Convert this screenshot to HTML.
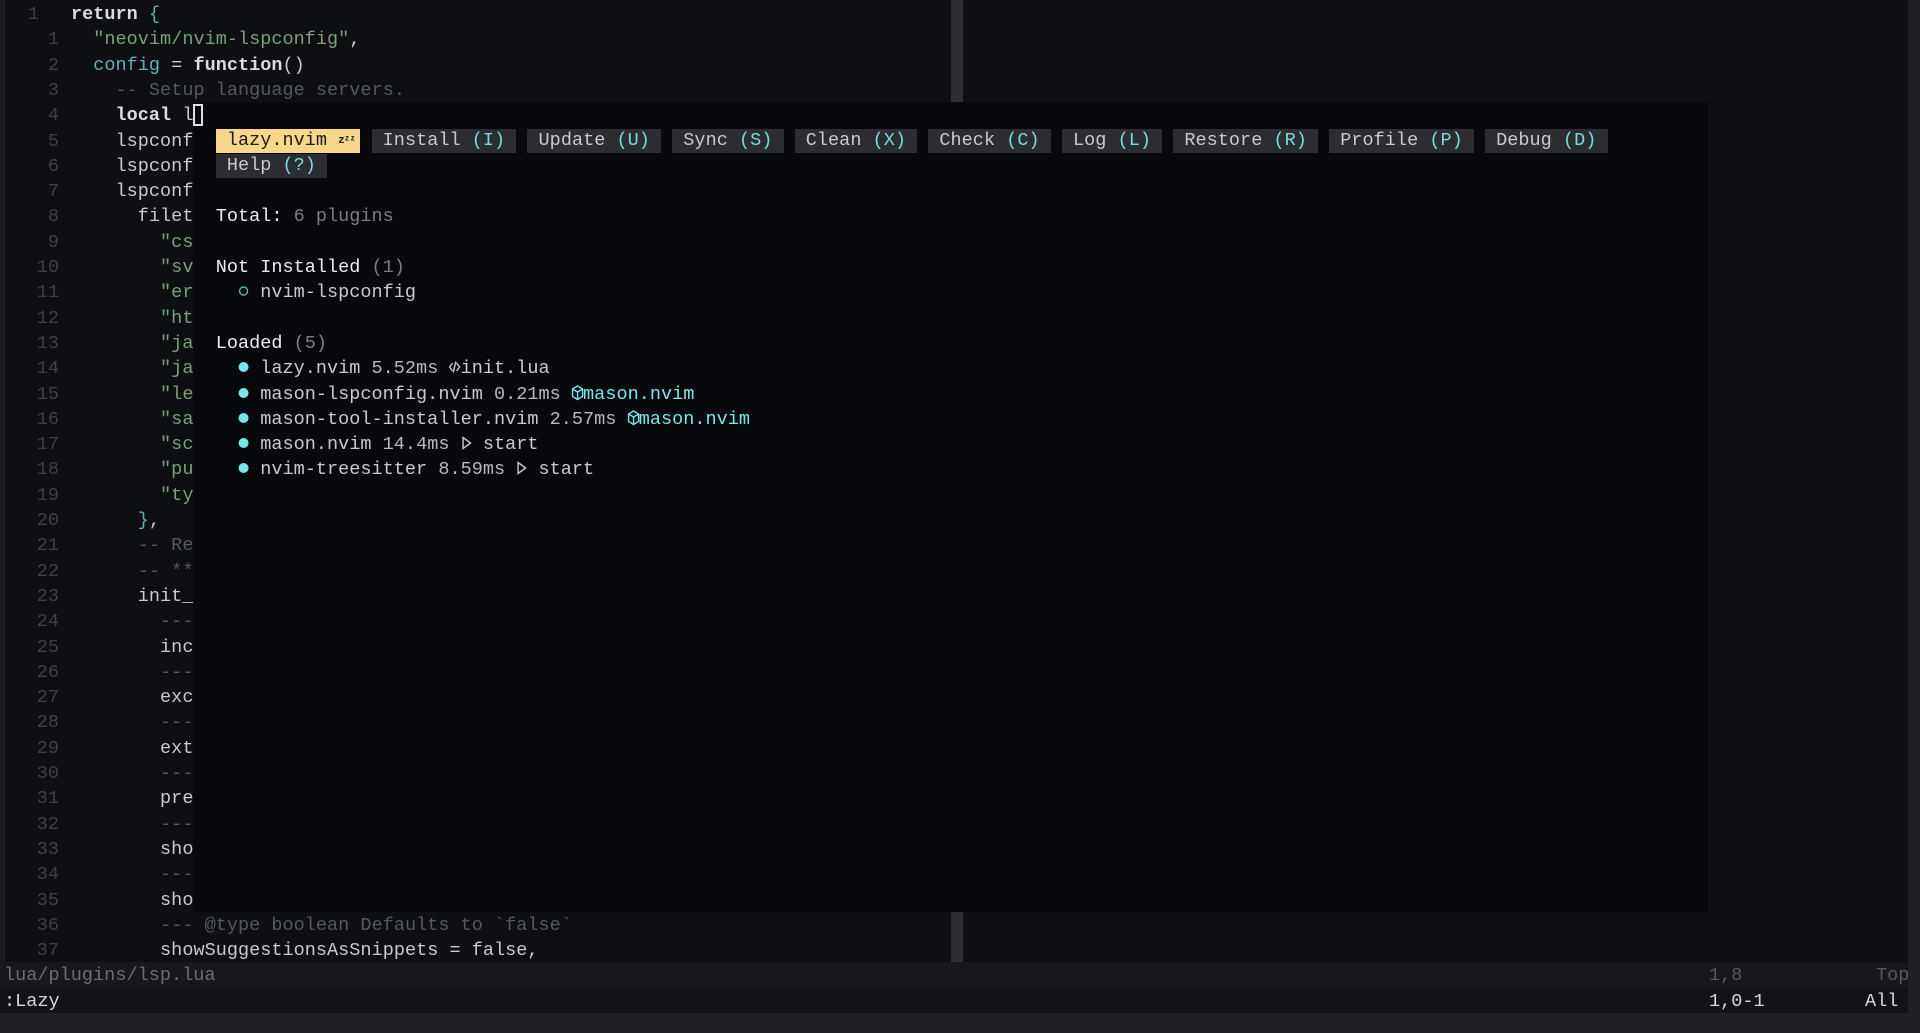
<!DOCTYPE html>
<html><head><meta charset="utf-8"><style>
html,body{margin:0;padding:0;width:1920px;height:1033px;overflow:hidden;background:#0e0f13;}
body{position:relative;font-family:"Liberation Mono","DejaVu Sans Mono",monospace;font-size:18.5px;letter-spacing:0.03px;color:#c9cacd;}
.r{position:absolute;height:25.3px;line-height:25.3px;white-space:pre;margin-top:2px}
.ln{position:absolute;left:0;width:59px;text-align:right;color:#3d4046;height:25.3px;line-height:25.3px;margin-top:2px}
.kw{color:#dcdcdc;font-weight:bold}
.tl{color:#5fb3b3}
.st{color:#79a078}
.cm{color:#55595f}
.dim{color:#7a7d83}
.b{background:#2b2d31;color:#c9cacd;display:inline-block;height:24px;line-height:24px;vertical-align:top}
.k{color:#79dcdc}
.cy{color:#79e6ea}
.dot{display:inline-block;width:11.13px;color:#79e6ea;font-size:24px;line-height:20px;vertical-align:top;text-align:center;margin-top:1px}
.ic{display:inline-block;width:11.13px;height:20px;vertical-align:-4px;overflow:visible}
</style></head><body>
<div style="position:absolute;left:0;top:0;width:5px;height:962px;background:#1c1d21"></div>
<div style="position:absolute;left:1908px;top:0;width:12px;height:1013px;background:#1f2023"></div>
<div style="position:absolute;left:951px;top:0;width:12px;height:962px;background:#2e2f33"></div>

<div class="ln" style="top:0;left:28px;width:auto;text-align:left;color:#3d4046">1</div>
<div id="nums"></div>

<div class="r" style="left:71px;top:0"><span class="kw">return</span> <span class="tl">{</span></div>
<div class="r" style="left:71px;top:25.3px">  <span class="st">"neovim/nvim-lspconfig"</span>,</div>
<div class="r" style="left:71px;top:50.6px">  <span class="tl">config</span> = <span class="kw">function</span>()</div>
<div class="r" style="left:71px;top:75.9px">    <span class="cm">-- Setup language servers.</span></div>
<div class="r" style="left:71px;top:101.2px">    <span class="kw">local</span> l</div>
<div class="r" style="left:71px;top:126.5px">    lspconf</div>
<div class="r" style="left:71px;top:151.8px">    lspconf</div>
<div class="r" style="left:71px;top:177.1px">    lspconf</div>
<div class="r" style="left:71px;top:202.4px">      filet</div>
<div class="r st" style="left:71px;top:227.7px">        "cs</div>
<div class="r st" style="left:71px;top:253px">        "sv</div>
<div class="r st" style="left:71px;top:278.3px">        "er</div>
<div class="r st" style="left:71px;top:303.6px">        "ht</div>
<div class="r st" style="left:71px;top:328.9px">        "ja</div>
<div class="r st" style="left:71px;top:354.2px">        "ja</div>
<div class="r st" style="left:71px;top:379.5px">        "le</div>
<div class="r st" style="left:71px;top:404.8px">        "sa</div>
<div class="r st" style="left:71px;top:430.1px">        "sc</div>
<div class="r st" style="left:71px;top:455.4px">        "pu</div>
<div class="r st" style="left:71px;top:480.7px">        "ty</div>
<div class="r" style="left:71px;top:506px">      <span class="tl">}</span>,</div>
<div class="r cm" style="left:71px;top:531.3px">      -- Re</div>
<div class="r cm" style="left:71px;top:556.6px">      -- **</div>
<div class="r" style="left:71px;top:581.9px">      init_</div>
<div class="r cm" style="left:71px;top:607.2px">        ---</div>
<div class="r" style="left:71px;top:632.5px">        inc</div>
<div class="r cm" style="left:71px;top:657.8px">        ---</div>
<div class="r" style="left:71px;top:683.1px">        exc</div>
<div class="r cm" style="left:71px;top:708.4px">        ---</div>
<div class="r" style="left:71px;top:733.7px">        ext</div>
<div class="r cm" style="left:71px;top:759px">        ---</div>
<div class="r" style="left:71px;top:784.3px">        pre</div>
<div class="r cm" style="left:71px;top:809.6px">        ---</div>
<div class="r" style="left:71px;top:834.9px">        sho</div>
<div class="r cm" style="left:71px;top:860.2px">        ---</div>
<div class="r" style="left:71px;top:885.5px">        sho</div>
<div class="r" style="left:71px;top:910.8px">        <span class="cm">--- @type boolean Defaults to `false`</span></div>
<div class="r" style="left:71px;top:936.1px">        showSuggestionsAsSnippets = false,</div>

<div style="position:absolute;left:193px;top:101.5px;width:1515px;height:810px;background:#08090d"></div>
<div style="position:absolute;left:193px;top:104px;width:10px;height:22px;border:2px solid #e0e0e0;box-sizing:border-box"></div>

<div class="r" style="left:215.7px;top:126.5px"><span class="b" style="background:#f8d68a;color:#1a1a1a"> lazy.nvim <span style="display:inline-block;width:11.13px;font-size:11px;font-weight:bold;vertical-align:2px;letter-spacing:-1px">zᶻᶻ</span> </span> <span class="b"> Install <span class="k">(I)</span> </span> <span class="b"> Update <span class="k">(U)</span> </span> <span class="b"> Sync <span class="k">(S)</span> </span> <span class="b"> Clean <span class="k">(X)</span> </span> <span class="b"> Check <span class="k">(C)</span> </span> <span class="b"> Log <span class="k">(L)</span> </span> <span class="b"> Restore <span class="k">(R)</span> </span> <span class="b"> Profile <span class="k">(P)</span> </span> <span class="b"> Debug <span class="k">(D)</span> </span></div>
<div class="r" style="left:215.7px;top:151.8px"><span class="b"> Help <span class="k">(?)</span> </span></div>
<div class="r" style="left:215.7px;top:202.4px"><span style="color:#eee">Total:</span> <span class="dim">6 plugins</span></div>
<div class="r" style="left:215.7px;top:253px"><span style="color:#eee">Not Installed</span> <span class="dim">(1)</span></div>
<div class="r" style="left:215.7px;top:278.3px">  <svg class="ic" viewBox="0 0 11 20"><circle cx="5.5" cy="10" r="4" stroke="#5fb3b3" stroke-width="1.4" fill="none"/></svg> nvim-lspconfig</div>
<div class="r" style="left:215.7px;top:328.9px"><span style="color:#eee">Loaded</span> <span class="dim">(5)</span></div>
<div class="r" style="left:215.7px;top:354.2px">  <svg class="ic" viewBox="0 0 11 20"><circle cx="5.5" cy="10" r="5" fill="#79e6ea"/></svg> lazy.nvim <span style="color:#b8b9bc">5.52ms</span> <svg class="ic" viewBox="0 0 11 20"><path d="M3.5 6 L0.5 10 L3.5 14 M7.5 6 L10.5 10 L7.5 14 M6.8 4.5 L4.2 15.5" stroke="#c9cacd" stroke-width="1.4" fill="none"/></svg>init.lua</div>
<div class="r" style="left:215.7px;top:379.5px">  <svg class="ic" viewBox="0 0 11 20"><circle cx="5.5" cy="10" r="5" fill="#79e6ea"/></svg> mason-lspconfig.nvim <span style="color:#b8b9bc">0.21ms</span> <svg class="ic" viewBox="0 0 11 20"><path d="M5.5 3 L10.5 6 L10.5 13.5 L5.5 16.5 L0.5 13.5 L0.5 6 Z M0.5 6 L5.5 9 L10.5 6 M5.5 9 L5.5 16.5" stroke="#79e6ea" stroke-width="1.4" fill="none"/></svg><span class="cy">mason.nvim</span></div>
<div class="r" style="left:215.7px;top:404.8px">  <svg class="ic" viewBox="0 0 11 20"><circle cx="5.5" cy="10" r="5" fill="#79e6ea"/></svg> mason-tool-installer.nvim <span style="color:#b8b9bc">2.57ms</span> <svg class="ic" viewBox="0 0 11 20"><path d="M5.5 3 L10.5 6 L10.5 13.5 L5.5 16.5 L0.5 13.5 L0.5 6 Z M0.5 6 L5.5 9 L10.5 6 M5.5 9 L5.5 16.5" stroke="#79e6ea" stroke-width="1.4" fill="none"/></svg><span class="cy">mason.nvim</span></div>
<div class="r" style="left:215.7px;top:430.1px">  <svg class="ic" viewBox="0 0 11 20"><circle cx="5.5" cy="10" r="5" fill="#79e6ea"/></svg> mason.nvim <span style="color:#b8b9bc">14.4ms</span> <svg class="ic" viewBox="0 0 11 20"><path d="M2 4.5 L9.5 10 L2 15.5 Z" stroke="#c9cacd" stroke-width="1.4" fill="none"/></svg> start</div>
<div class="r" style="left:215.7px;top:455.4px">  <svg class="ic" viewBox="0 0 11 20"><circle cx="5.5" cy="10" r="5" fill="#79e6ea"/></svg> nvim-treesitter <span style="color:#b8b9bc">8.59ms</span> <svg class="ic" viewBox="0 0 11 20"><path d="M2 4.5 L9.5 10 L2 15.5 Z" stroke="#c9cacd" stroke-width="1.4" fill="none"/></svg> start</div>

<div style="position:absolute;left:0;top:962px;width:1908px;height:25px;background:#17181b"></div>
<div style="position:absolute;left:0;top:987px;width:1908px;height:26px;background:#121316"></div>
<div style="position:absolute;left:0;top:1013px;width:1920px;height:20px;background:#202124"></div>
<div class="r" style="left:4px;top:961.4px;color:#6a6d72">lua/plugins/lsp.lua</div>
<div class="r" style="left:1709px;top:961.4px;color:#55585d">1,8</div>
<div class="r" style="left:1876px;top:961.4px;color:#55585d">Top</div>
<div class="r" style="left:4px;top:986.7px;color:#d8d8d8">:Lazy</div>
<div class="r" style="left:1709px;top:986.7px;color:#d8d8d8">1,0-1</div>
<div class="r" style="left:1865px;top:986.7px;color:#d8d8d8">All</div>

<script>
var h='';for(var i=1;i<=37;i++){h+='<div class="ln" style="top:'+(i*25.3).toFixed(1)+'px">'+i+'</div>';}
document.getElementById('nums').innerHTML=h;
</script>
</body></html>
